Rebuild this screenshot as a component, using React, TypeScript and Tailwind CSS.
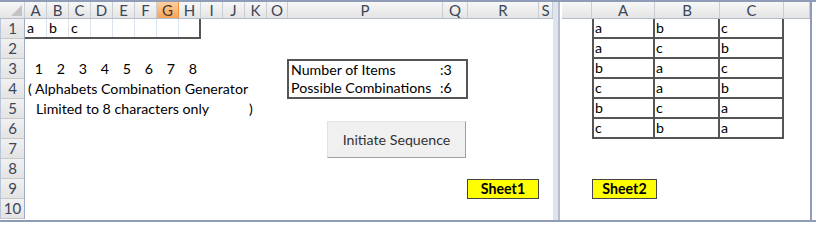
import React from 'react';

const font = { fontFamily: 'Lato, "Open Sans", sans-serif' };

const leftCols = ['A', 'B', 'C', 'D', 'E', 'F', 'G', 'H', 'I', 'J', 'K', 'O', 'P', 'Q', 'R', 'S'];
const leftWidths = [22, 22, 22, 22, 22, 22, 22, 22, 22, 22, 22, 21, 155, 25, 71, 14];

const combos = [
  ['a', 'b', 'c'],
  ['a', 'c', 'b'],
  ['b', 'a', 'c'],
  ['c', 'a', 'b'],
  ['b', 'c', 'a'],
  ['c', 'b', 'a'],
];

const HeaderCell: React.FC<{ label: string; width: number; active?: boolean }> = ({ label, width, active }) => (
  <div
    style={{ width }}
    className={`shrink-0 h-full flex items-center justify-center overflow-hidden border-r text-[15px] ${
      active
        ? 'bg-gradient-to-b from-[#fbcf9e] to-[#f7a35c] border-[#f0923a] text-[#4a3a2a]'
        : 'bg-gradient-to-b from-[#f7f7f7] to-[#e4e4e4] border-[#c9cdd4] text-[#3b4658]'
    }`}
  >
    {label}
  </div>
);

const RowHeaders: React.FC = () => (
  <div className="w-[25px] shrink-0 flex flex-col border-r border-[#9fadc4] border-l border-l-[#b9c5d8]">
    {Array.from({ length: 10 }, (_, i) => (
      <div
        key={i}
        className="h-[20px] flex items-center justify-center bg-gradient-to-b from-[#f1f1f1] to-[#e3e3e3] border-b border-[#c8c8c8] text-[15px] text-[#3b4658]"
      >
        {i + 1}
      </div>
    ))}
  </div>
);

const LeftSheet: React.FC = () => (
  <div className="w-[553px] shrink-0 flex flex-col">
    {/* column headers */}
    <div className="h-[17px] flex border-b border-[#b3bccb]">
      <div className="w-[25px] shrink-0 h-full bg-gradient-to-b from-[#f7f7f7] to-[#e4e4e4] border-r border-[#c9cdd4] flex items-end justify-end p-[2px]">
        <svg width="11" height="11" viewBox="0 0 11 11">
          <path d="M11 0 L11 11 L0 11 Z" fill="#c3c3c3" />
        </svg>
      </div>
      {leftCols.map((c, i) => (
        <HeaderCell key={c} label={c} width={leftWidths[i]} active={c === 'G'} />
      ))}
    </div>

    <div className="flex">
      <RowHeaders />
      <div className="grid grid-cols-[repeat(11,22px)_21px_155px_25px_71px_14px] grid-rows-[repeat(10,20px)] text-[14.2px] text-black">
        {/* row 1 */}
        <div className="col-start-1 col-end-9 row-start-1 flex border-b-2 border-[#555]">
          {['a', 'b', 'c', '', '', '', '', ''].map((v, i) => (
            <div
              key={i}
              className={`w-[22px] shrink-0 h-full flex items-center pl-[2px] ${
                i === 7 ? 'border-r-2 border-[#555]' : 'border-r border-[#dbe3ee]'
              }`}
            >
              {v}
            </div>
          ))}
        </div>

        {/* row 3 */}
        <div className="col-start-1 col-end-9 row-start-3 flex">
          {[1, 2, 3, 4, 5, 6, 7, 8].map((n) => (
            <div key={n} className="w-[22px] shrink-0 h-full flex items-center justify-end pr-[4px]">
              {n}
            </div>
          ))}
        </div>

        {/* row 4 + 5 */}
        <div className="col-start-1 col-end-13 row-start-4 flex items-center pl-[3px] whitespace-nowrap">
          ( Alphabets Combination Generator
        </div>
        <div className="col-start-1 col-end-11 row-start-5 flex items-center pl-[11px] whitespace-nowrap">
          Limited to 8 characters only
        </div>
        <div className="col-start-11 row-start-5 flex items-center pl-[4px]">)</div>

        {/* info box */}
        <div className="col-start-13 col-end-15 row-start-3 row-end-5 ml-[-1px] border-2 border-[#555] flex flex-col justify-center px-[2px]">
          <div className="h-[18px] flex items-center">
            <span className="w-[149px]">Number of Items</span>
            <span>:3</span>
          </div>
          <div className="h-[18px] flex items-center">
            <span className="w-[149px]">Possible Combinations</span>
            <span>:6</span>
          </div>
        </div>

        {/* button */}
        <div className="col-start-13 col-end-15 row-start-6 row-end-8 ml-[39px] mr-[2px] mt-[2px] mb-[1px] bg-[#f0f0f0] border border-[#e2e2e2] border-r-[#a0a0a0] border-b-[#a0a0a0] flex items-center justify-center text-[#333]">
          Initiate Sequence
        </div>

        {/* sheet label */}
        <div className="col-start-15 row-start-9 ml-[-1px] bg-[#ffff00] border border-[#444] flex items-center justify-center font-bold">
          Sheet1
        </div>
      </div>
    </div>
  </div>
);

const Divider: React.FC = () => (
  <div className="w-[9px] shrink-0 flex">
    <div className="w-[5px] bg-[#dfe4ef]" />
    <div className="w-[2px] bg-[#b7bfcc]" />
    <div className="w-[2px] bg-white" />
  </div>
);

const RightSheet: React.FC = () => (
  <div className="w-[250px] shrink-0 flex flex-col border-r-2 border-[#8e9cb8]">
    <div className="h-[17px] flex border-b border-[#b3bccb]">
      <HeaderCell label="" width={30} />
      <HeaderCell label="A" width={63} />
      <HeaderCell label="B" width={65} />
      <HeaderCell label="C" width={64} />
      <HeaderCell label="" width={26} />
    </div>
    <div className="flex">
      <div className="w-[30px] shrink-0" />
      <div className="grid grid-cols-[63px_65px_64px_26px] grid-rows-[repeat(10,20px)] text-[14.2px] text-black">
        <div className="col-start-1 col-end-4 row-start-1 row-end-7 grid grid-cols-[63px_65px_64px] grid-rows-[repeat(6,20px)]">
          {combos.flatMap((row, r) =>
            row.map((v, c) => (
              <div
                key={`${r}-${c}`}
                className={`flex items-center pl-[1px] border-r-2 border-b-2 border-[#555] ${
                  c === 0 ? 'border-l-2' : ''
                }`}
              >
                {v}
              </div>
            ))
          )}
        </div>
        <div className="col-start-1 row-start-9 w-[65px] bg-[#ffff00] border border-[#444] flex items-center justify-center font-bold">
          Sheet2
        </div>
      </div>
    </div>
  </div>
);

export default function App() {
  return (
    <div className="w-[816px] h-[226px] bg-white" style={font}>
      <div className="h-[222px] flex border-t-2 border-b-2 border-[#8e9cb8] overflow-hidden">
        <LeftSheet />
        <Divider />
        <RightSheet />
      </div>
    </div>
  );
}
